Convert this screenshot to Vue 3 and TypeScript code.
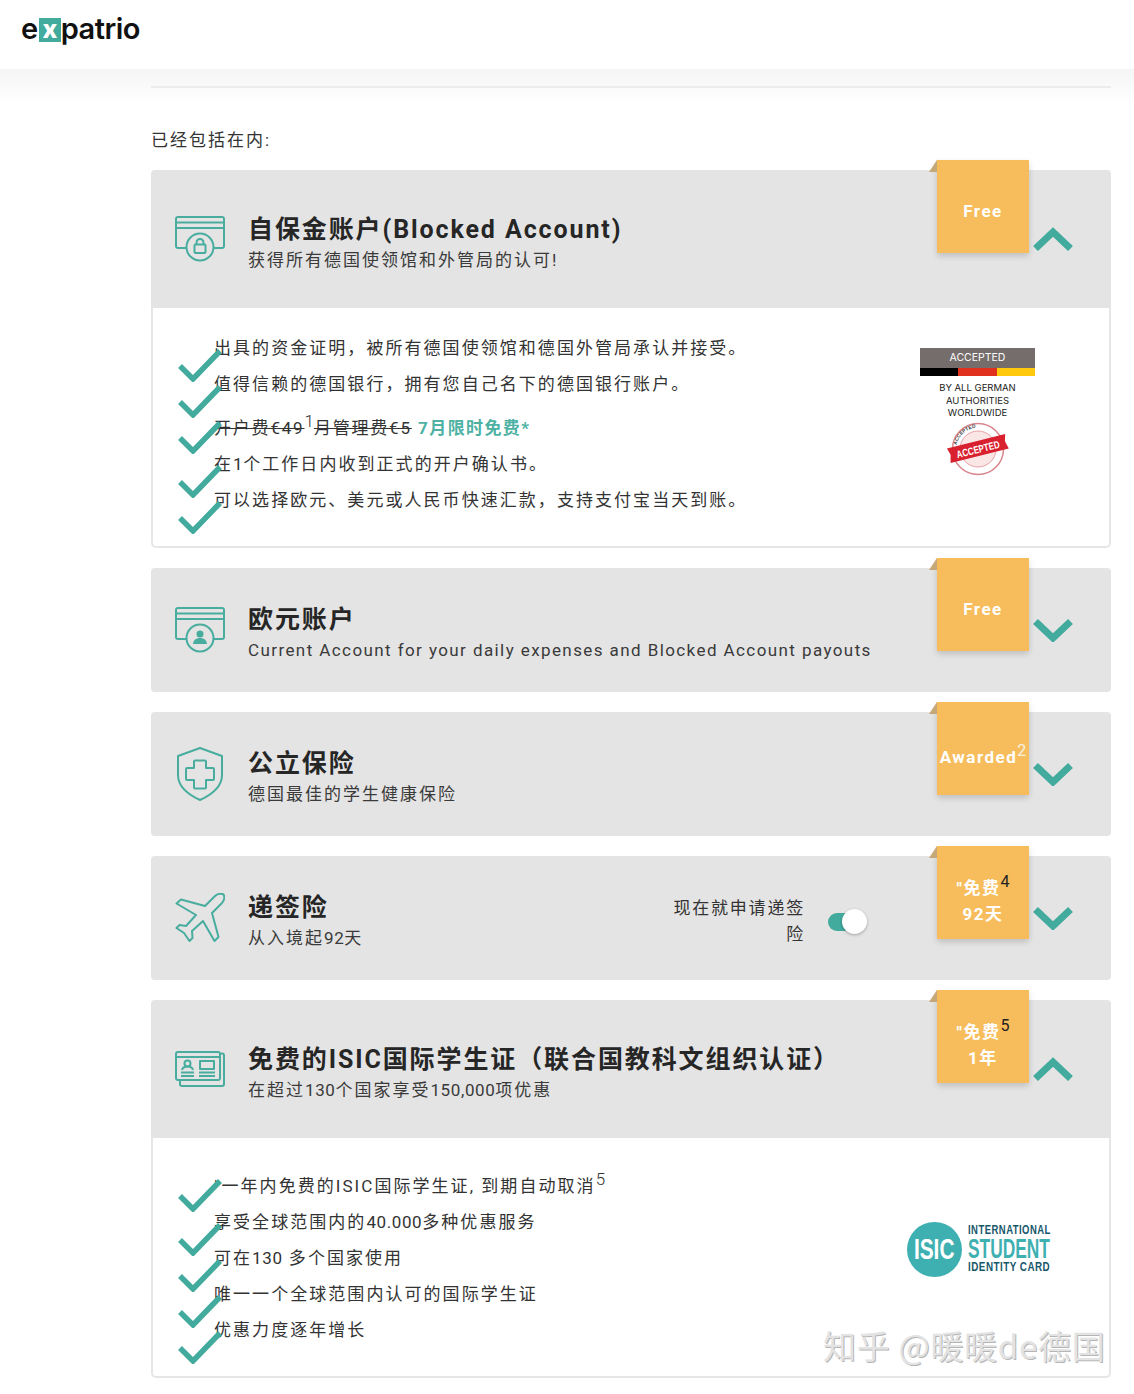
<script setup lang="ts">
const isicRows: { before: string; num?: string; after: string }[] = [
  { before: "享受全球范围内的", num: "40.000", after: "多种优惠服务" },
  { before: "可在", num: "130", after: " 多个国家使用" },
  { before: "唯一一个全球范围内认可的国际学生证", after: "" },
  { before: "优惠力度逐年增长", after: "" },
];
</script>

<template>
  <div class="page">
    <header class="topbar">
      <div class="logo">
        <span>e</span><span class="logo-x">x</span><span>patrio</span>
      </div>
    </header>

    <main class="content">
      <hr class="rule" />
      <p class="intro">已经包括在内:</p>

      <section class="card">
        <div class="card-head tall">
          <svg class="icon" width="50" height="46" viewBox="0 0 50 46">
            <path d="M12 32H3a2 2 0 0 1-2-2V3a2 2 0 0 1 2-2h44a2 2 0 0 1 2 2v27a2 2 0 0 1-2 2h-9M1 6.5h48M1 12h48" />
            <circle cx="25" cy="31" r="13.5" />
            <rect x="19.5" y="28.5" width="11" height="8.5" rx="1" />
            <path d="M21.5 28.5v-2a3.5 3.5 0 0 1 7 0v2" />
          </svg>
          <div class="titles">
            <h2>自保金账户(Blocked Account)</h2>
            <p>获得所有德国使领馆和外管局的认可!</p>
          </div>
          <svg class="chevron" width="40" height="24" viewBox="0 0 40 24"><path d="M2.5 21.5L20 5l17.5 16.5" /></svg>
          <div class="badge"><span>Free</span></div>
        </div>
        <div class="card-body">
          <ul class="ticks">
            <li>
              <svg class="tick" width="44" height="33" viewBox="0 0 44 33"><path d="M2 17l13 13L42 2" /></svg>
              出具的资金证明&#65292;被所有德国使领馆和德国外管局承认并接受。
            </li>
            <li>
              <svg class="tick" width="44" height="33" viewBox="0 0 44 33"><path d="M2 17l13 13L42 2" /></svg>
              值得信赖的德国银行&#65292;拥有您自己名下的德国银行账户。
            </li>
            <li class="has-sup">
              <svg class="tick" width="44" height="33" viewBox="0 0 44 33"><path d="M2 17l13 13L42 2" /></svg>
              <s>开户费€49</s><sup>1</sup><s>月管理费€5</s> <b class="promo">7月限时免费*</b>
            </li>
            <li>
              <svg class="tick" width="44" height="33" viewBox="0 0 44 33"><path d="M2 17l13 13L42 2" /></svg>
              在<span class="num">1</span>个工作日内收到正式的开户确认书。
            </li>
            <li>
              <svg class="tick" width="44" height="33" viewBox="0 0 44 33"><path d="M2 17l13 13L42 2" /></svg>
              可以选择欧元、美元或人民币快速汇款&#65292;支持支付宝当天到账。
            </li>
          </ul>
          <aside class="accepted">
            <div class="accepted-top">ACCEPTED</div>
            <div class="flag"><i class="f1" /><i class="f2" /><i class="f3" /></div>
            <div class="accepted-txt">BY ALL GERMAN<br />AUTHORITIES<br />WORLDWIDE</div>
            <svg class="stamp" width="62" height="54" viewBox="0 0 62 54">
              <circle cx="31" cy="27" r="25.5" fill="#fff" stroke="#d9848c" stroke-width="1.5" />
              <circle cx="31" cy="27" r="18" fill="#fbe6e6" stroke="#e5a3a8" />
              <path id="stampArc" d="M9 27a22 22 0 0 1 40-12" fill="none" />
              <text font-size="5" font-weight="700" fill="#444" font-family="Liberation Sans, sans-serif"><textPath href="#stampArc" startOffset="4">ACCEPTED</textPath></text>
              <g transform="rotate(-14 31 27)">
                <path d="M1 19h60l-2 7 2 8H1l2-8z" fill="#d9202e" />
                <text x="31" y="31" text-anchor="middle" font-size="10.5" font-weight="700" fill="#fff" font-family="Liberation Sans, sans-serif" textLength="44" lengthAdjust="spacingAndGlyphs">ACCEPTED</text>
              </g>
            </svg>
          </aside>
        </div>
      </section>

      <section class="card">
        <div class="card-head">
          <svg class="icon" width="50" height="46" viewBox="0 0 50 46">
            <path d="M12 32H3a2 2 0 0 1-2-2V3a2 2 0 0 1 2-2h44a2 2 0 0 1 2 2v27a2 2 0 0 1-2 2h-9M1 6.5h48M1 12h48" />
            <circle cx="25" cy="31" r="13.5" />
            <circle class="solid" cx="25" cy="27" r="3.5" />
            <path class="solid" d="M18 37c.5-4 3-6 7-6s6.5 2 7 6z" />
          </svg>
          <div class="titles">
            <h2>欧元账户</h2>
            <p class="latin">Current Account for your daily expenses and Blocked Account payouts</p>
          </div>
          <svg class="chevron" width="40" height="24" viewBox="0 0 40 24"><path d="M2.5 3.5L20 20 37.5 3.5" /></svg>
          <div class="badge"><span>Free</span></div>
        </div>
      </section>

      <section class="card">
        <div class="card-head">
          <svg class="icon" width="50" height="54" viewBox="0 0 50 54">
            <path d="M25 1l22 8v19c0 12-11 20-22 25C14 48 3 40 3 28V9z" />
            <path d="M20 13.5h10a1 1 0 0 1 1 1V21h7a1 1 0 0 1 1 1v10a1 1 0 0 1-1 1h-7v7.5a1 1 0 0 1-1 1H20a1 1 0 0 1-1-1V33h-7a1 1 0 0 1-1-1V22a1 1 0 0 1 1-1h7v-6.5a1 1 0 0 1 1-1z" />
          </svg>
          <div class="titles">
            <h2>公立保险</h2>
            <p>德国最佳的学生健康保险</p>
          </div>
          <svg class="chevron" width="40" height="24" viewBox="0 0 40 24"><path d="M2.5 3.5L20 20 37.5 3.5" /></svg>
          <div class="badge award"><span>Awarded<sup class="sup-light">2</sup></span></div>
        </div>
      </section>

      <section class="card">
        <div class="card-head">
          <svg class="icon" width="50" height="50" viewBox="0 0 50 50">
            <path d="M48.5 1.5c-2-1.5-6-1-9 2L30 13 6 6.5l-4.5 4L21 22 11 33l-6.5-1-3 3L9 40l5.5 8 3-3-.5-7 11-10 11.5 20 4-4L37 20l9.5-9.5c3-3 3.5-7 2-9z" />
          </svg>
          <div class="titles">
            <h2>递签险</h2>
            <p>从入境起<span class="num">92</span>天</p>
          </div>
          <div class="apply">
            <span class="apply-txt">现在就申请递签险</span>
            <span class="switch"><i /></span>
          </div>
          <svg class="chevron" width="40" height="24" viewBox="0 0 40 24"><path d="M2.5 3.5L20 20 37.5 3.5" /></svg>
          <div class="badge two"><span>"免费<sup>4</sup><br />92天</span></div>
        </div>
      </section>

      <section class="card">
        <div class="card-head tall">
          <svg class="icon" width="50" height="36" viewBox="0 0 50 36">
            <path d="M46 2.5h1a2 2 0 0 1 2 2V33a2 2 0 0 1-2 2H7a2 2 0 0 1-2-2v-3" />
            <rect x="1" y="1" width="44" height="28" rx="2" />
            <path d="M1 6h44M6 25h13M6 21.5h13M24 25h16M24 21.5h16" />
            <circle cx="12.5" cy="12.5" r="3" />
            <path d="M7 19c.5-2.5 2.5-3.5 5.5-3.5s5 1 5.5 3.5" />
            <rect x="25" y="10" width="14" height="8" />
          </svg>
          <div class="titles">
            <h2>免费的ISIC国际学生证&#65288;联合国教科文组织认证&#65289;</h2>
            <p>在超过<span class="num">130</span>个国家享受<span class="num">150,000</span>项优惠</p>
          </div>
          <svg class="chevron" width="40" height="24" viewBox="0 0 40 24"><path d="M2.5 21.5L20 5l17.5 16.5" /></svg>
          <div class="badge two"><span>"免费<sup>5</sup><br />1年</span></div>
        </div>
        <div class="card-body">
          <ul class="ticks">
            <li class="has-sup">
              <svg class="tick" width="44" height="33" viewBox="0 0 44 33"><path d="M2 17l13 13L42 2" /></svg>
              "一年内免费的ISIC国际学生证, 到期自动取消<sup>5</sup>
            </li>
            <li v-for="row in isicRows" :key="row.before">
              <svg class="tick" width="44" height="33" viewBox="0 0 44 33"><path d="M2 17l13 13L42 2" /></svg>
              {{ row.before }}<span v-if="row.num" class="num">{{ row.num }}</span>{{ row.after }}
            </li>
          </ul>
          <aside class="isic">
            <div class="isic-disc"><span>ISIC</span></div>
            <div class="isic-words">
              <span class="w1">INTERNATIONAL</span>
              <span class="w2">STUDENT</span>
              <span class="w3">IDENTITY CARD</span>
            </div>
          </aside>
        </div>
      </section>
    </main>

    <div class="watermark">知乎 @暖暖de德国</div>
  </div>
</template>

<style>
html,
body {
  margin: 0;
  background: #fff;
}
</style>

<style scoped>
.page {
  position: relative;
  width: 1134px;
  height: 1394px;
  overflow: hidden;
  background: #fff;
  font-family: Roboto, "Noto Sans CJK SC", sans-serif;
  color: #333;
}
.topbar {
  height: 69px;
  padding-left: 21px;
  display: flex;
  align-items: center;
  background: #fff;
}
.logo {
  display: flex;
  align-items: center;
  height: 56px;
  font-family: Inter, sans-serif;
  font-size: 29px;
  font-weight: 600;
  letter-spacing: -0.5px;
  color: #111;
  margin-top: -13px;
}
.logo-x {
  width: 22px;
  height: 24px;
  margin: 4px 0 0 1px;
  background: #42ab9e;
  color: #fff;
  font-weight: 800;
  font-size: 25px;
  line-height: 22px;
  text-align: center;
}
.content {
  padding: 17px 23px 0 151px;
  background: linear-gradient(#f5f5f5, #fff 36px);
}
.rule {
  height: 2px;
  margin: 0;
  border: 0;
  background: #ececec;
}
.intro {
  margin: 39px 0 17px;
  font-size: 17px;
  line-height: 26px;
  letter-spacing: 2px;
}
.card {
  margin-bottom: 20px;
  border-radius: 4px;
}
.card-head {
  position: relative;
  display: flex;
  align-items: center;
  height: 124px;
  padding: 0 38px 0 24px;
  border-radius: 4px;
  background: #e4e4e4;
}
.card-head.tall {
  height: 138px;
  border-radius: 4px 4px 0 0;
}
.icon {
  flex: none;
  fill: none;
  stroke: #48ad9f;
  stroke-width: 2;
  stroke-linejoin: round;
}
.icon .solid {
  fill: #48ad9f;
  stroke: none;
}
.titles {
  flex: 1;
  min-width: 0;
  margin: 8px 0 0 23px;
}
.tall .titles {
  margin-top: 10px;
}
.titles h2 {
  margin: 0;
  font-size: 25px;
  line-height: 32px;
  font-weight: 700;
  letter-spacing: 1.9px;
  color: #262626;
  white-space: nowrap;
}
.titles p {
  margin: 0;
  font-size: 17px;
  line-height: 28px;
  letter-spacing: 2px;
  color: #3a3a3a;
  white-space: nowrap;
}
.titles p.latin {
  letter-spacing: 1.41px;
}
.num {
  letter-spacing: 0.6px;
}
.chevron {
  flex: none;
  fill: none;
  stroke: #42ab9e;
  stroke-width: 7;
}
.badge {
  position: absolute;
  left: 786px;
  top: -10px;
  box-sizing: border-box;
  width: 92px;
  height: 93px;
  padding-top: 8px;
  display: flex;
  align-items: center;
  justify-content: center;
  text-align: center;
  background: #f7bd5c;
  box-shadow: 0 3px 6px rgba(0, 0, 0, 0.16);
  color: #fff;
  font-size: 17px;
  font-weight: 700;
  line-height: 26px;
  letter-spacing: 1.5px;
  white-space: nowrap;
}
.badge::before {
  content: "";
  position: absolute;
  left: -8px;
  top: 0;
  border-style: solid;
  border-width: 0 0 12px 8px;
  border-color: transparent transparent #c5a877 transparent;
}
.badge.two {
  padding-top: 16px;
}
.badge.award {
  padding-top: 17px;
}
.badge sup {
  font-size: 16px;
  font-weight: 400;
  color: #222;
  line-height: 0;
  letter-spacing: 0;
}
.badge sup.sup-light {
  color: #f5f0e0;
}
.apply {
  display: flex;
  align-items: center;
  margin-right: 166px;
}
.apply-txt {
  width: 134px;
  text-align: right;
  font-size: 17px;
  line-height: 26px;
  letter-spacing: 1.8px;
  margin-top: 6px;
}
.switch {
  position: relative;
  width: 32px;
  height: 18px;
  margin: 8px 7px 0 23px;
  border-radius: 9px;
  background: #42ab9e;
}
.switch i {
  position: absolute;
  right: -7px;
  top: -4px;
  width: 25px;
  height: 25px;
  border-radius: 50%;
  background: #fff;
  box-shadow: 0 1px 3px rgba(0, 0, 0, 0.3);
}
.card-body {
  box-sizing: border-box;
  display: flex;
  justify-content: space-between;
  height: 240px;
  padding: 21px 0 0 61px;
  border: 2px solid #e6e6e6;
  border-top: 0;
  border-radius: 0 0 5px 5px;
  background: #fff;
}
.ticks {
  margin: 0;
  padding: 0;
  list-style: none;
}
.ticks li {
  position: relative;
  height: 36px;
  font-size: 17px;
  line-height: 38px;
  letter-spacing: 2.05px;
  white-space: nowrap;
}
.ticks li.has-sup {
  height: 44px;
  padding-top: 8px;
  box-sizing: border-box;
}
.ticks s {
  letter-spacing: 1.8px;
}
.ticks sup {
  font-size: 17px;
  line-height: 0;
  letter-spacing: 0;
  font-weight: 300;
}
.tick {
  position: absolute;
  left: -36px;
  top: 20px;
  fill: none;
  stroke: #42ab9e;
  stroke-width: 5.5;
}
.promo {
  color: #4db1a3;
  font-weight: 700;
  letter-spacing: 1.4px;
}
.accepted {
  width: 115px;
  margin: 19px 74px 0 0;
  text-align: center;
}
.accepted-top {
  height: 20px;
  background: #756c6c;
  color: #fff;
  font-family: Inter, sans-serif;
  font-size: 10.5px;
  line-height: 20px;
}
.flag {
  display: flex;
  height: 8px;
}
.flag i {
  flex: 1;
}
.f1 {
  background: #000;
}
.f2 {
  background: #e0301e;
}
.f3 {
  background: #ffc90d;
}
.accepted-txt {
  margin-top: 6px;
  font-family: Inter, sans-serif;
  font-size: 9.5px;
  line-height: 12.5px;
  color: #222;
}
.stamp {
  display: block;
  margin: 2px auto 0;
  overflow: visible;
}
.isic {
  display: flex;
  align-items: center;
  gap: 6px;
  height: 56px;
  margin: 62px 59px 0 0;
}
.isic-disc {
  width: 55px;
  height: 55px;
  border-radius: 50%;
  background: #3fb0b1;
  color: #fff;
  display: flex;
  align-items: center;
  justify-content: center;
  font-family: "Liberation Sans", sans-serif;
  font-weight: 700;
  font-size: 29px;
}
.isic-disc span {
  transform: scaleX(0.72);
}
.isic-words {
  display: flex;
  flex-direction: column;
  width: 82px;
  font-family: "Liberation Sans", sans-serif;
  font-weight: 700;
  color: #17576b;
}
.isic-words span {
  display: block;
  transform-origin: left center;
  white-space: nowrap;
}
.w1 {
  font-size: 12px;
  line-height: 13px;
  letter-spacing: 0.6px;
  transform: scaleX(0.79);
}
.w2 {
  font-size: 28px;
  line-height: 24px;
  color: #3fb0b1;
  transform: scaleX(0.62);
}
.w3 {
  font-size: 12px;
  line-height: 13px;
  letter-spacing: 0.6px;
  transform: scaleX(0.82);
}
.watermark {
  position: absolute;
  left: 823px;
  top: 1323px;
  font-family: "Noto Sans CJK SC", sans-serif;
  font-size: 33px;
  line-height: 44px;
  letter-spacing: 0.7px;
  white-space: nowrap;
  color: #e3e3e3;
  text-shadow: 1px 1px 0 #b5b5b5;
}
</style>
